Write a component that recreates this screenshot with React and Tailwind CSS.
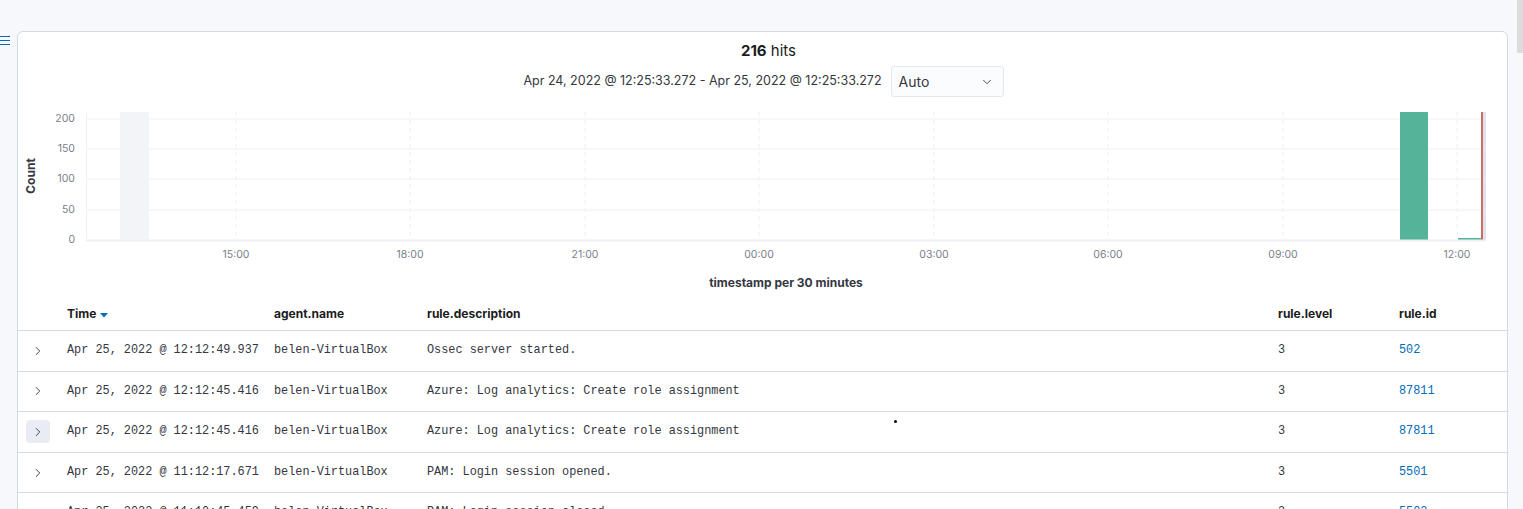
import { ChevronDown, ChevronRight } from 'lucide-react';

const rows = [
  { time: 'Apr 25, 2022 @ 12:12:49.937', agent: 'belen-VirtualBox', desc: 'Ossec server started.', level: '3', id: '502' },
  { time: 'Apr 25, 2022 @ 12:12:45.416', agent: 'belen-VirtualBox', desc: 'Azure: Log analytics: Create role assignment', level: '3', id: '87811' },
  { time: 'Apr 25, 2022 @ 12:12:45.416', agent: 'belen-VirtualBox', desc: 'Azure: Log analytics: Create role assignment', level: '3', id: '87811', active: true },
  { time: 'Apr 25, 2022 @ 11:12:17.671', agent: 'belen-VirtualBox', desc: 'PAM: Login session opened.', level: '3', id: '5501' },
  { time: 'Apr 25, 2022 @ 11:10:45.459', agent: 'belen-VirtualBox', desc: 'PAM: Login session closed.', level: '3', id: '5502' },
];

const yTicks = [
  { label: '200', y: 18 },
  { label: '150', y: 48 },
  { label: '100', y: 78 },
  { label: '50', y: 109 },
  { label: '0', y: 139 },
];

const xTicks = [
  { label: '15:00', x: 218 },
  { label: '18:00', x: 392 },
  { label: '21:00', x: 567 },
  { label: '00:00', x: 741 },
  { label: '03:00', x: 916 },
  { label: '06:00', x: 1090 },
  { label: '09:00', x: 1265 },
  { label: '12:00', x: 1439 },
];

const cols = 'grid grid-cols-[49px_207px_153px_851px_121px_1fr]';

function HitsChart() {
  return (
    <svg width="1489" height="195" className="block" style={{ fontFamily: 'Inter, "Liberation Sans", sans-serif' }}>
      {/* grid */}
      {yTicks.slice(0, 4).map((t) => (
        <line key={t.y} x1="68" x2="1468" y1={t.y} y2={t.y} stroke="#eef0f4" strokeWidth="1" />
      ))}
      {xTicks.map((t) => (
        <line key={t.x} x1={t.x} x2={t.x} y1="11" y2="139" stroke="#eceef2" strokeWidth="1" strokeDasharray="4 4" />
      ))}
      <line x1="68.5" x2="68.5" y1="11" y2="139" stroke="#eef0f4" />

      {/* bars */}
      <rect x="102" y="11" width="29" height="128" fill="#f3f4f8" />
      <rect x="1382" y="11" width="28" height="128" fill="#54b399" />
      <rect x="1440" y="137" width="27" height="2" fill="#54b399" />
      <rect x="1465" y="11" width="3" height="128" fill="#e2e3e9" />
      <rect x="1463" y="11" width="2" height="128" fill="#cd6b65" />

      <line x1="68" x2="1468" y1="139.5" y2="139.5" stroke="#edf0f4" strokeWidth="2" />

      {/* axes labels */}
      {yTicks.map((t) => (
        <text key={t.label} x="57" y={t.y} textAnchor="end" dominantBaseline="middle" fontSize="10.5" fill="#7a808c">
          {t.label}
        </text>
      ))}
      {xTicks.map((t) => (
        <text key={t.label} x={t.x} y="154" textAnchor="middle" dominantBaseline="middle" fontSize="10.5" fill="#7a808c">
          {t.label}
        </text>
      ))}
      <text x="14" y="75" transform="rotate(-90 14 75)" textAnchor="middle" dominantBaseline="middle" fontSize="12" fontWeight="700" fill="#343741">
        Count
      </text>
      <text x="768" y="183" textAnchor="middle" dominantBaseline="middle" fontSize="12" fontWeight="700" fill="#343741">
        timestamp per 30 minutes
      </text>
    </svg>
  );
}

export default function App() {
  return (
    <div className="relative flex h-[509px] w-full overflow-hidden bg-[#f7f8fc] font-['Inter','Liberation_Sans',sans-serif] text-[#343741]">
      <div className="w-[17px] shrink-0 pt-[36px]">
        <div className="flex w-[10px] flex-col gap-[3px]">
          <span className="h-px w-[10px] bg-[#006bb8]" />
          <span className="h-px w-[10px] bg-[#006bb8]" />
          <span className="h-px w-[10px] bg-[#006bb8]" />
        </div>
      </div>

      <div className="mt-[31px] w-[1491px] shrink-0 self-start rounded-[6px] border border-[#d3dae6] bg-white">
        <div className="pt-[9px] text-center text-[15px] leading-[20px] text-[#1a1c21]">
          <span className="ml-[12px] font-bold">216</span> hits
        </div>

        <div className="mt-[5px] flex items-center justify-center gap-[9px] pl-[2px]">
          <span className="text-[12.5px] text-[#343741]">Apr 24, 2022 @ 12:25:33.272 - Apr 25, 2022 @ 12:25:33.272</span>
          <div className="flex h-[31px] w-[113px] items-center justify-between rounded-[3px] border border-[#e3e8f0] bg-[#fbfcfd] pl-[7px] pr-[9px] text-[14px] text-[#343741]">
            <span>Auto</span>
            <ChevronDown size={14} strokeWidth={1.5} className="text-[#343741]" />
          </div>
        </div>

        <div className="mt-[4px]">
          <HitsChart />
        </div>

        <div className={`${cols} h-[35px] items-center border-b border-[#d3dae6] pt-[2px] text-[12px] font-bold text-[#1a1c21]`}>
          <div />
          <div className="flex items-center gap-[4px]">
            Time
            <svg width="8" height="5" viewBox="0 0 8 5" className="mt-[2px]">
              <path d="M0 0h8L4 4.5z" fill="#006bb8" />
            </svg>
          </div>
          <div>agent.name</div>
          <div>rule.description</div>
          <div>rule.level</div>
          <div>rule.id</div>
        </div>

        {rows.map((r, i) => (
          <div
            key={i}
            className={`${cols} h-[40.6px] items-center border-b border-[#d3dae6] font-['Liberation_Mono',monospace] text-[11.85px] text-[#343741]`}
          >
            <div className="flex justify-end pr-[17px]">
              <div className={`flex h-[23px] w-[24px] items-center justify-center rounded-[4px] ${r.active ? 'bg-[#e9edf3]' : ''}`}>
                <ChevronRight size={14} strokeWidth={1.6} className="text-[#343741]" />
              </div>
            </div>
            <div>{r.time}</div>
            <div>{r.agent}</div>
            <div>{r.desc}</div>
            <div>{r.level}</div>
            <div className="text-[#006bb8]">{r.id}</div>
          </div>
        ))}
      </div>

      <div className="ml-[9px] w-[6px] shrink-0">
        <div className="h-[53px] w-full bg-[#dcdcdc]" />
      </div>

      <span className="absolute left-[894px] top-[420px] h-[3px] w-[3px] rounded-full bg-black" />
    </div>
  );
}
